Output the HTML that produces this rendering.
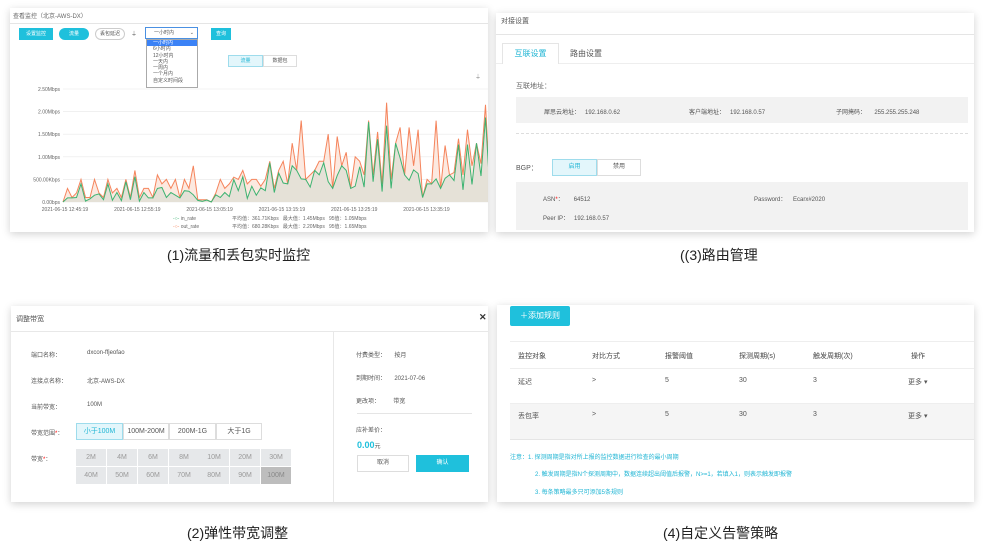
<!DOCTYPE html>
<html><head><meta charset="utf-8"><style>
*{margin:0;padding:0;box-sizing:border-box}
body{width:1000px;height:554px;background:#fff;position:relative;overflow:hidden;font-family:"Liberation Sans","Noto Sans CJK SC",sans-serif;color:#555}
.p{position:absolute;background:#fff;box-shadow:0 2px 8px rgba(0,0,0,.18)}
.a{position:absolute;white-space:nowrap}
.cap{position:absolute;font-size:14px;color:#222;white-space:nowrap}
.btn{position:absolute;background:#1fc0dc;color:#fff;font-size:5px;text-align:center}
.t6{font-size:6px}.t7{font-size:7px}.t8{font-size:8px}
.cell{position:absolute;background:#e6e8ea;color:#999;font-size:7px;text-align:center;line-height:17px;width:30px;height:17px}
</style></head><body>

<!-- Panel 1 -->
<div class="p" style="left:10px;top:8px;width:478px;height:224px">
<div class="a t6" style="left:3px;top:3px;color:#666">查看监控（北京-AWS-DX）</div>
<div class="a" style="left:0;top:15px;width:478px;height:1px;background:#e5e5e5"></div>
<div class="btn" style="left:9px;top:20px;width:34px;height:12px;line-height:12px">设置监控</div>
<div class="btn" style="left:49px;top:20px;width:30px;height:12px;line-height:12px;border-radius:6px">流量</div>
<div class="a" style="left:85px;top:20px;width:30px;height:12px;border:1px solid #ccc;border-radius:6px;font-size:5px;line-height:10px;text-align:center">丢包延迟</div>
<div class="a t6" style="left:121px;top:21px;color:#777">⏚</div>
<div class="a" style="left:135px;top:19px;width:53px;height:12px;border:1px solid #4a90e2;font-size:5px;line-height:10px;padding-left:8px">一小时内 <span style="float:right;margin-right:3px">⌄</span></div>
<div class="a" style="left:136px;top:31px;width:52px;height:49px;border:1px solid #aaa;background:#fff;font-size:5px;line-height:6.3px;padding-left:6px;overflow:hidden">
<div style="background:#3b82f6;color:#fff;margin-left:-6px;padding-left:6px">一小时内</div>6小时内<br>12小时内<br>一天内<br>一周内<br>一个月内<br>自定义时间段</div>
<div class="btn" style="left:201px;top:20px;width:20px;height:12px;line-height:12px">查询</div>
<div class="a" style="left:218px;top:47px;width:35px;height:12px;border:1px solid #9edcec;background:#e3f6fb;color:#1fb5d4;font-size:5px;line-height:10px;text-align:center">流量</div>
<div class="a" style="left:253px;top:47px;width:34px;height:12px;border:1px solid #ddd;font-size:5px;line-height:10px;text-align:center">数据包</div>
<div class="a t6" style="left:465px;top:64px;color:#999">⏚</div>
<svg class="a" style="left:0;top:0" width="478" height="224" id="ch"></svg>
<div class="a" style="left:163px;top:207px;font-size:5px;line-height:8px;color:#666"><span style="color:#3cb371">-○-</span> in_rate<br><span style="color:#f5845c">-○-</span> out_rate</div>
<div class="a" style="left:222px;top:207px;font-size:5px;line-height:8px;color:#666">平均值：361.71Kbps &nbsp; 最大值：1.45Mbps &nbsp; 95值：1.05Mbps<br>平均值：680.28Kbps &nbsp; 最大值：2.20Mbps &nbsp; 95值：1.65Mbps</div>
</div>

<!-- Panel 3 -->
<div class="p" style="left:496px;top:13px;width:478px;height:219px">
<div class="a t7" style="left:5px;top:3px;color:#555">对接设置</div>
<div class="a" style="left:0;top:21px;width:478px;height:1px;background:#e5e5e5"></div>
<div class="a" style="left:0;top:50px;width:478px;height:1px;background:#eee"></div>
<div class="a" style="left:6px;top:30px;width:57px;height:21px;border:1px solid #e5e5e5;border-bottom:none;background:#fff;color:#1fb5d4;font-size:8px;text-align:center;line-height:20px">互联设置</div>
<div class="a t8" style="left:74px;top:35px;color:#555">路由设置</div>
<div class="a t7" style="left:20px;top:68px;color:#666">互联地址：</div>
<div class="a" style="left:20px;top:84px;width:452px;height:26px;background:#f2f2f2"></div>
<div class="a t6" style="left:48px;top:94px">犀思云地址： &nbsp; 192.168.0.62</div>
<div class="a t6" style="left:193px;top:94px">客户端地址： &nbsp; 192.168.0.57</div>
<div class="a t6" style="left:340px;top:94px">子网掩码： &nbsp;&nbsp;&nbsp; 255.255.255.248</div>
<div class="a" style="left:20px;top:120px;width:452px;border-top:1px dashed #ddd"></div>
<div class="a t7" style="left:20px;top:150px">BGP：</div>
<div class="a" style="left:56px;top:146px;width:45px;height:17px;border:1px solid #9edcec;background:#e3f6fb;color:#1fb5d4;font-size:6px;line-height:15px;text-align:center">启用</div>
<div class="a" style="left:101px;top:146px;width:44px;height:17px;border:1px solid #ddd;font-size:6px;line-height:15px;text-align:center">禁用</div>
<div class="a" style="left:20px;top:169px;width:452px;height:48px;background:#f2f2f2"></div>
<div class="a t6" style="left:47px;top:181px">ASN<span style="color:red">*</span>： &nbsp;&nbsp;&nbsp;&nbsp; 64512</div>
<div class="a t6" style="left:258px;top:181px">Password： &nbsp;&nbsp; Ecarx#2020</div>
<div class="a t6" style="left:47px;top:200px">Peer IP： &nbsp; 192.168.0.57</div>
</div>

<!-- Panel 2 -->
<div class="p" style="left:11px;top:306px;width:477px;height:196px">
<div class="a t7" style="left:5px;top:8px;color:#555">调整带宽</div>
<div class="a" style="left:468px;top:6px;font-size:9px;color:#333;font-weight:bold">✕</div>
<div class="a" style="left:0;top:25px;width:477px;height:1px;background:#e8e8e8"></div>
<div class="a" style="left:322px;top:26px;width:1px;height:170px;background:#e8e8e8"></div>
<div class="a t6" style="left:20px;top:44px">端口名称：</div><div class="a t6" style="left:76px;top:44px">dxcon-ffjeofao</div>
<div class="a t6" style="left:20px;top:70px">连接点名称：</div><div class="a t6" style="left:76px;top:70px">北京-AWS-DX</div>
<div class="a t6" style="left:20px;top:96px">当前带宽：</div><div class="a t6" style="left:76px;top:96px">100M</div>
<div class="a t6" style="left:20px;top:122px">带宽范围<span style="color:red">*</span>：</div>
<div class="a" style="left:65px;top:117px;width:47px;height:17px;border:1px solid #9edcec;background:#e3f6fb;color:#1fb5d4;font-size:7px;line-height:15px;text-align:center">小于100M</div>
<div class="a" style="left:112px;top:117px;width:46px;height:17px;border:1px solid #ddd;font-size:7px;line-height:15px;text-align:center">100M-200M</div>
<div class="a" style="left:158px;top:117px;width:47px;height:17px;border:1px solid #ddd;font-size:7px;line-height:15px;text-align:center">200M-1G</div>
<div class="a" style="left:205px;top:117px;width:46px;height:17px;border:1px solid #ddd;font-size:7px;line-height:15px;text-align:center">大于1G</div>
<div class="a t6" style="left:20px;top:148px">带宽<span style="color:red">*</span>：</div>
<div class="cell" style="left:65px;top:143px">2M</div><div class="cell" style="left:96px;top:143px">4M</div><div class="cell" style="left:127px;top:143px">6M</div><div class="cell" style="left:158px;top:143px">8M</div><div class="cell" style="left:188px;top:143px">10M</div><div class="cell" style="left:219px;top:143px">20M</div><div class="cell" style="left:250px;top:143px">30M</div>
<div class="cell" style="left:65px;top:161px">40M</div><div class="cell" style="left:96px;top:161px">50M</div><div class="cell" style="left:127px;top:161px">60M</div><div class="cell" style="left:158px;top:161px">70M</div><div class="cell" style="left:188px;top:161px">80M</div><div class="cell" style="left:219px;top:161px">90M</div><div class="cell" style="left:250px;top:161px;background:#bdbdbd;color:#888">100M</div>
<div class="a t6" style="left:345px;top:44px">付费类型： &nbsp;&nbsp;&nbsp; 按月</div>
<div class="a t6" style="left:345px;top:67px">到期时间： &nbsp;&nbsp;&nbsp; 2021-07-06</div>
<div class="a t6" style="left:345px;top:90px">更改项： &nbsp;&nbsp;&nbsp;&nbsp;&nbsp;&nbsp; 带宽</div>
<div class="a" style="left:346px;top:107px;width:115px;height:1px;background:#e5e5e5"></div>
<div class="a t6" style="left:345px;top:119px">应补差价：</div>
<div class="a" style="left:346px;top:134px;color:#1fc0dc;font-size:9px;font-weight:bold">0.00<span style="font-size:6px;color:#555;font-weight:normal">元</span></div>
<div class="a" style="left:346px;top:149px;width:52px;height:17px;border:1px solid #ddd;font-size:6px;line-height:15px;text-align:center">取消</div>
<div class="btn" style="left:405px;top:149px;width:53px;height:17px;line-height:17px;font-size:6px">确认</div>
</div>

<!-- Panel 4 -->
<div class="p" style="left:497px;top:305px;width:477px;height:197px">
<div class="btn" style="left:13px;top:1px;width:60px;height:20px;line-height:20px;font-size:8px;border-radius:2px">＋添加规则</div>
<div class="a" style="left:13px;top:36px;width:464px;height:1px;background:#eee"></div>
<div class="a" style="left:13px;top:63px;width:464px;height:1px;background:#eee"></div>
<div class="a" style="left:13px;top:98px;width:464px;height:37px;background:#f5f5f5;border-top:1px solid #eee;border-bottom:1px solid #e5e5e5"></div>
<div class="a t7" style="left:21px;top:46px;color:#444">监控对象</div><div class="a t7" style="left:95px;top:46px;color:#444">对比方式</div><div class="a t7" style="left:168px;top:46px;color:#444">报警阈值</div><div class="a t7" style="left:242px;top:46px;color:#444">探测周期(s)</div><div class="a t7" style="left:316px;top:46px;color:#444">触发周期(次)</div><div class="a t7" style="left:414px;top:46px;color:#444">操作</div>
<div class="a t7" style="left:21px;top:72px">延迟</div><div class="a t7" style="left:95px;top:72px">&gt;</div><div class="a t7" style="left:168px;top:72px">5</div><div class="a t7" style="left:242px;top:72px">30</div><div class="a t7" style="left:316px;top:72px">3</div><div class="a t7" style="left:411px;top:72px">更多 ▾</div>
<div class="a t7" style="left:21px;top:106px">丢包率</div><div class="a t7" style="left:95px;top:106px">&gt;</div><div class="a t7" style="left:168px;top:106px">5</div><div class="a t7" style="left:242px;top:106px">30</div><div class="a t7" style="left:316px;top:106px">3</div><div class="a t7" style="left:411px;top:106px">更多 ▾</div>
<div class="a t6" style="left:13px;top:147px;color:#1fb5d4">注意：1. 探测周期是指对所上报的监控数据进行检查的最小周期</div>
<div class="a t6" style="left:38px;top:164px;color:#1fb5d4">2. 触发周期是指N个探测周期中，数据连续超出阈值后报警，N&gt;=1，若填入1，则表示触发即报警</div>
<div class="a t6" style="left:38px;top:182px;color:#1fb5d4">3. 每条策略最多只可添加5条规则</div>
</div>

<div class="cap" style="left:167px;top:245px">(1)流量和丢包实时监控</div>
<div class="cap" style="left:680px;top:245px">((3)路由管理</div>
<div class="cap" style="left:187px;top:523px">(2)弹性带宽调整</div>
<div class="cap" style="left:663px;top:523px">(4)自定义告警策略</div>

<script>
var out=[0,0.3,0.1,0.2,0.5,0.1,0.1,0.5,0.2,0.1,0.5,0.2,0.3,0.1,0.5,0.1,0.7,0.1,0.3,0.3,0.1,0.6,0.4,0.5,0.3,0.5,0.1,0.5,0.3,0.8,0.05,0.05,0.05,0.0,0.2,0.5,0.3,0.4,0.55,0.5,0.7,0.4,0.5,0.5,0.35,0.5,0.9,0.3,0.7,0.9,0.4,1.3,0.7,1.8,0.5,0.6,0.7,0.9,0.9,1.5,0.3,1.45,0.8,1.1,0.3,1.0,0.9,0.6,1.8,0.6,1.55,0.4,2.2,0.5,1.3,1.65,0.6,1.65,0.8,1.6,0.1,0.5,0.4,1.8,0.3,1.25,0.6,0.65,1.4,0.6,1.6,0.8,1.3,0.85,2.15,0.3];
var inn=out.map(function(v,i){var f=[0.7,0.3,0.9,0.5,0.8,0.2][i%6];return Math.max(0,Math.min(v,v*f+(i>45?0.15:0)))});
var x0=53,x1=480,yb=202-8,k=45.2;
var n=out.length;
function pts(a){return a.map(function(v,i){return (x0+(x1-x0)*i/(n-1)).toFixed(1)+','+(yb-v*k).toFixed(1)}).join(' ')}
var g='';
['2.50Mbps','2.00Mbps','1.50Mbps','1.00Mbps','500.00Kbps','0.00bps'].forEach(function(l,i){var y=yb-(2.5-i*0.5)*k;g+='<line x1="53" x2="480" y1="'+y+'" y2="'+y+'" stroke="#e8e8e8" stroke-width="0.6"/><text x="50" y="'+(y+2)+'" font-size="5" fill="#666" text-anchor="end">'+l+'</text>'});
['2021-06-15 12:45:19','2021-06-15 12:55:19','2021-06-15 13:05:19','2021-06-15 13:15:19','2021-06-15 13:25:19','2021-06-15 13:35:19'].forEach(function(l,i){g+='<text x="'+(55+i*72.3)+'" y="'+(yb+9)+'" font-size="5" fill="#666" text-anchor="middle">'+l+'</text>'});
var po=pts(out),pi=pts(inn);
g+='<polygon points="'+x0+','+yb+' '+po+' '+x1+','+yb+'" fill="#fbe3d8" opacity="0.8"/>';
g+='<polygon points="'+x0+','+yb+' '+pi+' '+x1+','+yb+'" fill="#e2e0d6" opacity="0.9"/>';
g+='<polyline points="'+po+'" fill="none" stroke="#f5845c" stroke-width="1"/>';
g+='<polyline points="'+pi+'" fill="none" stroke="#3cb371" stroke-width="1"/>';
document.getElementById('ch').innerHTML=g;
</script>
</body></html>
